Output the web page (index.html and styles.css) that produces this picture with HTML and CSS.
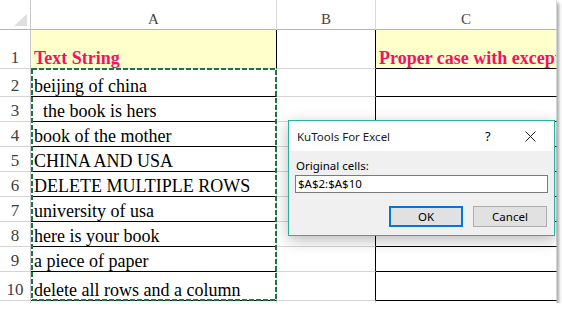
FILE: index.html
```html
<!DOCTYPE html>
<html>
<head>
<meta charset="utf-8">
<link rel="stylesheet" href="styles.css">
</head>
<body>
<div class="frame">
  <div class="sheet">
    <div class="c corner"><svg width="13" height="12" viewBox="0 0 13 12"><polygon points="13,0 13,12 0,12" fill="#dedede"/></svg></div>
    <div class="c colh">A</div>
    <div class="c colh">B</div>
    <div class="c colh">C</div>

    <div class="c rowh">1</div>
    <div class="c a yel bk-r title">Text String</div>
    <div class="c bk-r"></div>
    <div class="c yel bk-b title">Proper case with exception</div>

    <div class="c rowh">2</div>
    <div class="c a bk-b">beijing of china</div>
    <div class="c bk-r"></div>
    <div class="c bk-b"></div>

    <div class="c rowh">3</div>
    <div class="c a bk-b">  the book is hers</div>
    <div class="c bk-r"></div>
    <div class="c bk-b"></div>

    <div class="c rowh">4</div>
    <div class="c a bk-b">book of the mother</div>
    <div class="c bk-r"></div>
    <div class="c bk-b"></div>

    <div class="c rowh">5</div>
    <div class="c a bk-b">CHINA AND USA</div>
    <div class="c bk-r"></div>
    <div class="c bk-b"></div>

    <div class="c rowh">6</div>
    <div class="c a bk-b">DELETE MULTIPLE ROWS</div>
    <div class="c bk-r"></div>
    <div class="c bk-b"></div>

    <div class="c rowh">7</div>
    <div class="c a bk-b">university of usa</div>
    <div class="c bk-r"></div>
    <div class="c bk-b"></div>

    <div class="c rowh">8</div>
    <div class="c a bk-b">here is your book</div>
    <div class="c bk-r"></div>
    <div class="c bk-b"></div>

    <div class="c rowh">9</div>
    <div class="c a bk-b">a piece of paper</div>
    <div class="c bk-r"></div>
    <div class="c bk-b"></div>

    <div class="c rowh">10</div>
    <div class="c a bk-b">delete all rows and a column</div>
    <div class="c bk-r"></div>
    <div class="c bk-b"></div>

    <div class="c rowh">11</div>
    <div class="c"></div>
    <div class="c"></div>
    <div class="c"></div>
  </div>

  <svg class="marquee" width="246" height="233" viewBox="0 0 246 233">
    <rect x="1" y="1" width="244" height="231" fill="none" stroke="#217346" stroke-width="2" stroke-dasharray="5 2"/>
  </svg>

  <div class="dialog">
    <div class="dlg-title">
      <span class="dlg-name">KuTools For Excel</span>
      <span class="dlg-help">?</span>
      <svg class="dlg-close" width="11" height="11" viewBox="0 0 11 11"><path d="M0.5 0.5 L10.5 10.5 M10.5 0.5 L0.5 10.5" stroke="#222" stroke-width="1" fill="none"/></svg>
    </div>
    <div class="dlg-body">
      <div class="dlg-label">Original cells:</div>
      <div class="dlg-input">$A$2:$A$10</div>
      <div class="dlg-buttons">
        <div class="btn btn-ok">OK</div>
        <div class="btn">Cancel</div>
      </div>
    </div>
  </div>
</div>
</body>
</html>
```

FILE: styles.css
```css
html, body {
  margin: 0;
  padding: 0;
  background: #ffffff;
}

.frame {
  position: relative;
  width: 557px;
  height: 303px;
  overflow: hidden;
  background: #ffffff;
  box-shadow: 2px 3px 3px rgba(0, 0, 0, 0.35);
}

.sheet {
  display: grid;
  grid-template-columns: 31px 246px 99px 181px;
  grid-template-rows: 30px 39px 28px repeat(7, 25px) 29px 20px;
  font-family: "Liberation Serif", "Times New Roman", serif;
  font-size: 18px;
  color: #000000;
}

.c {
  box-sizing: border-box;
  border-right: 1px solid #d4d4d4;
  border-bottom: 1px solid #d4d4d4;
  display: flex;
  align-items: flex-end;
  padding: 0 0 0 3px;
  line-height: 20px;
  white-space: pre;
  overflow: hidden;
}

.corner {
  justify-content: flex-end;
  padding: 0 3px 3px 0;
  border-bottom-color: #b4b4b4;
  border-right-color: #c8c8c8;
}

.corner svg {
  display: block;
}

.colh {
  justify-content: center;
  padding: 0 0 1px 0;
  font-size: 15px;
  line-height: 17px;
  color: #444444;
  border-bottom-color: #b4b4b4;
  border-right-color: #dadada;
}

.rowh {
  justify-content: center;
  padding: 0;
  font-size: 17px;
  color: #3f3f3f;
  border-right-color: #c8c8c8;
}

.yel {
  background: #ffffcc;
}

.title {
  color: #f50f66;
  font-weight: bold;
}

.bk-r {
  border-right-color: #000000;
}

.bk-b {
  border-bottom-color: #000000;
}

.marquee {
  position: absolute;
  left: 31px;
  top: 68px;
  display: block;
}

.dialog {
  position: absolute;
  left: 288px;
  top: 120px;
  width: 267px;
  box-sizing: border-box;
  border: 1px solid #2ab0a0;
  background: #f0f0f0;
  box-shadow: 0 4px 14px rgba(0, 0, 0, 0.28);
  font-family: "Noto Sans", "Open Sans", sans-serif;
  font-size: 11.5px;
  color: #000000;
}

.dlg-title {
  height: 30px;
  background: #ffffff;
  display: flex;
  align-items: center;
  padding: 0 0 0 8px;
}

.dlg-name {
  flex: 1;
  color: #1a1a1a;
}

.dlg-help {
  width: 14px;
  font-size: 13px;
  margin-right: 26px;
}

.dlg-close {
  display: block;
  margin-right: 18px;
}

.dlg-body {
  padding: 6px 6px 8px 6px;
  display: flex;
  flex-direction: column;
}

.dlg-label {
  line-height: 17px;
  margin-left: 1px;
}

.dlg-input {
  margin-top: 1px;
  height: 18px;
  box-sizing: border-box;
  background: #ffffff;
  border: 1px solid #7a7a7a;
  line-height: 16px;
  padding-left: 2px;
}

.dlg-buttons {
  margin-top: 13px;
  display: flex;
  justify-content: flex-end;
  gap: 10px;
  padding-right: 1px;
}

.btn {
  width: 74px;
  height: 21px;
  box-sizing: border-box;
  border: 1px solid #adadad;
  background: #e1e1e1;
  display: flex;
  align-items: center;
  justify-content: center;
}

.btn-ok {
  border: 2px solid #0078d7;
}
```
